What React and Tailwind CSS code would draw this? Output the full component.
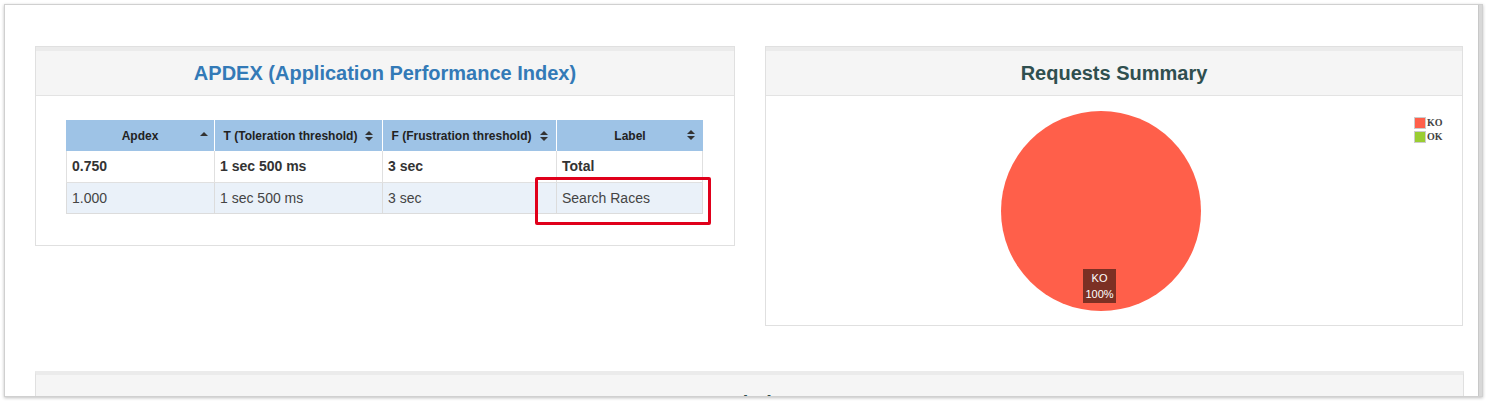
export default function App() {
  const f = { fontFamily: '"Liberation Sans", Arial, sans-serif' };
  const Sort = ({ up }) => (
    <svg width="8" height="10" viewBox="0 0 8 10" className="shrink-0">
      <path d="M0 4 L4 0 L8 4 Z" fill="#333" />
      {!up && <path d="M0 6 L4 10 L8 6 Z" fill="#333" />}
    </svg>
  );
  return (
    <div style={f} className="w-[1490px] h-[401px] bg-white pt-[4px] pl-[4px]">
      <div className="w-[1479px] h-[393px] border border-[#d0d0d0] shadow-[0_1px_3px_rgba(0,0,0,0.25)] flex overflow-hidden">
        <div className="flex-1 pl-[30px] pr-[14px] pt-[41px] flex flex-col">
          <div className="flex gap-[30px] items-start">
            <div className="w-[700px] h-[200px] border border-[#e0e0e0] flex flex-col">
              <div className="h-[49px] bg-[#f5f5f5] border-b border-[#e3e3e3] border-t-4 border-t-[#ebebeb] flex items-center justify-center text-[20px] font-bold text-[#337ab7]">
                APDEX (Application Performance Index)
              </div>
              <div className="pl-[30px] pt-[24px] relative">
                <div className="w-[637px] text-[14px] text-[#333]">
                  <div className="flex h-[31px] bg-[#9ec3e6] font-bold text-[12px] text-[#222]">
                    <div className="w-[149px] border-r border-white flex items-center justify-center relative">Apdex<span className="absolute right-[6px] top-[12px]"><Sort up /></span></div>
                    <div className="w-[168px] border-r border-white flex items-center justify-center gap-[8px]">T (Toleration threshold)<Sort /></div>
                    <div className="w-[174px] border-r border-white flex items-center justify-center gap-[8px]">F (Frustration threshold)<Sort /></div>
                    <div className="flex-1 flex items-center justify-center relative">Label<span className="absolute right-[8px] top-[10px]"><Sort /></span></div>
                  </div>
                  <div className="flex h-[32px] font-bold bg-white border-x border-b border-[#e0e0e0]">
                    <div className="w-[148px] border-r border-[#e0e0e0] flex items-center pl-[5px]">0.750</div>
                    <div className="w-[168px] border-r border-[#e0e0e0] flex items-center pl-[5px]">1 sec 500 ms</div>
                    <div className="w-[174px] border-r border-[#e0e0e0] flex items-center pl-[5px]">3 sec</div>
                    <div className="flex-1 flex items-center pl-[5px]">Total</div>
                  </div>
                  <div className="flex h-[31px] bg-[#eaf1f9] border-x border-b border-[#dcdcdc] text-[#444]">
                    <div className="w-[148px] border-r border-[#dcdcdc] flex items-center pl-[5px]">1.000</div>
                    <div className="w-[168px] border-r border-[#dcdcdc] flex items-center pl-[5px]">1 sec 500 ms</div>
                    <div className="w-[174px] border-r border-[#dcdcdc] flex items-center pl-[5px]">3 sec</div>
                    <div className="flex-1 flex items-center pl-[5px]">Search Races</div>
                  </div>
                </div>
                <div className="absolute left-[499px] top-[81px] w-[176px] h-[48px] border-[3px] border-[#e0001b] rounded-[2px]" />
              </div>
            </div>
            <div className="w-[698px] h-[280px] border border-[#e0e0e0] flex flex-col">
              <div className="h-[49px] bg-[#f5f5f5] border-b border-[#e3e3e3] border-t-4 border-t-[#ebebeb] flex items-center justify-center text-[20px] font-bold text-[#2f4f4f]">
                Requests Summary
              </div>
              <div className="flex-1 relative">
                <div className="absolute left-[235px] top-[15px] w-[200px] h-[200px] rounded-full bg-[#ff5f4a]" />
                <div className="absolute left-[317px] top-[173px] w-[33px] h-[34px] bg-[#7c3024] text-white text-[11px] leading-[16px] flex flex-col items-center justify-center">
                  <span>KO</span><span>100%</span>
                </div>
                <div className="absolute left-[648px] top-[20px] text-[10px] font-bold text-[#444] leading-[14px]" style={{ fontFamily: '"Liberation Serif", serif' }}>
                  <div className="flex items-center gap-[1px]"><span className="w-[12px] h-[12px] bg-[#ff5f4a] border border-[#ccc]" />KO</div>
                  <div className="flex items-center gap-[1px]"><span className="w-[12px] h-[12px] bg-[#9acd32] border border-[#ccc]" />OK</div>
                </div>
              </div>
            </div>
          </div>
          <div className="mt-[45px] w-[1429px] h-[40px] border border-[#e0e0e0] bg-[#f5f5f5] border-t-4 border-t-[#ebebeb] flex justify-center pt-[13px] text-[20px] font-bold text-[#2f4f4f]">
            Statistics
          </div>
        </div>
        <div className="w-[5px] bg-[#d8d8d8] border-l border-[#c8c8c8]" />
      </div>
    </div>
  );
}
